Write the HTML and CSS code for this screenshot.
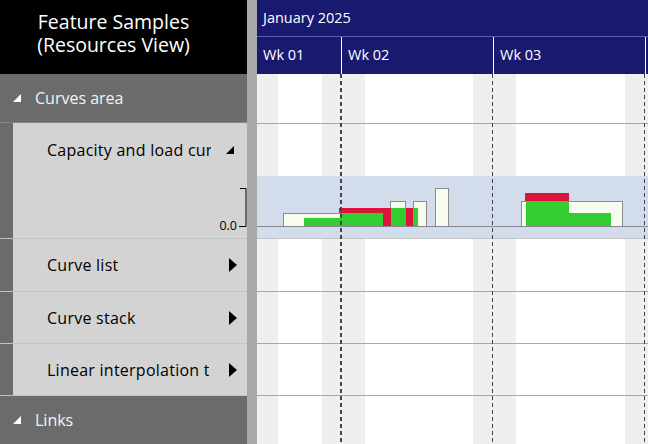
FILE: index.html
```html
<!DOCTYPE html>
<html>
<head>
<meta charset="utf-8">
<link rel="stylesheet" href="styles.css">
</head>
<body>
<div class="app">
  <div class="left">
    <div class="title"><div class="title-line">Feature Samples</div><div class="title-line">(Resources View)</div></div>
    <div class="group-row">
      <svg class="tri" width="10" height="10" viewBox="0 0 10 10"><polygon points="9,1 9,9 1,9" fill="#fff"/></svg>
      <span class="group-label">Curves area</span>
    </div>
    <div class="child cap-row">
      <div class="indent"></div>
      <div class="child-body">
        <div class="child-head">
          <span class="label">Capacity and load curves</span>
          <svg class="tri" width="10" height="10" viewBox="0 0 10 10"><polygon points="9,1 9,9 1,9" fill="#000"/></svg>
        </div>
        <div class="axis">
          <span class="axis-label">0.0</span>
          <svg class="bracket" width="8" height="40" viewBox="0 0 8 40"><path d="M1 0.5 H7 V38.5 H0" fill="none" stroke="#000" stroke-width="1"/></svg>
        </div>
      </div>
    </div>
    <div class="child item-row">
      <div class="indent"></div>
      <div class="child-body item-body">
        <span class="label">Curve list</span>
        <svg class="arrow" width="8" height="14" viewBox="0 0 8 14"><polygon points="0,0 8,7 0,14" fill="#000"/></svg>
      </div>
    </div>
    <div class="child item-row">
      <div class="indent"></div>
      <div class="child-body item-body">
        <span class="label">Curve stack</span>
        <svg class="arrow" width="8" height="14" viewBox="0 0 8 14"><polygon points="0,0 8,7 0,14" fill="#000"/></svg>
      </div>
    </div>
    <div class="child item-row">
      <div class="indent"></div>
      <div class="child-body item-body">
        <span class="label">Linear interpolation type</span>
        <svg class="arrow" width="8" height="14" viewBox="0 0 8 14"><polygon points="0,0 8,7 0,14" fill="#000"/></svg>
      </div>
    </div>
    <div class="group-row links-row">
      <svg class="tri" width="10" height="10" viewBox="0 0 10 10"><polygon points="9,1 9,9 1,9" fill="#fff"/></svg>
      <span class="group-label">Links</span>
    </div>
  </div>
  <div class="splitter"></div>
  <div class="chart">
    <div class="chart-head">
      <div class="month">January 2025</div>
      <div class="weeks">
        <div class="wk wk-first">Wk 01</div>
        <div class="wk">Wk 02</div>
        <div class="wk">Wk 03</div>
        <div class="wk wk-last"></div>
      </div>
    </div>
    <div class="chart-body">
      <div class="crow crow-group"></div>
      <div class="crow crow-cap">
        <div class="cap-top"></div>
        <div class="band">
          <svg width="391" height="62" viewBox="0 0 391 62">
            <g fill="#f6fdef" stroke="#8c8c8c" stroke-width="1">
              <rect x="26.5" y="37.5" width="57" height="13"/>
              <rect x="133.5" y="25.5" width="15" height="25"/>
              <rect x="156.5" y="25.5" width="13" height="25"/>
              <rect x="178.5" y="12.5" width="13" height="38"/>
              <rect x="264.5" y="25.5" width="101" height="25"/>
            </g>
            <g fill="#33cc33">
              <rect x="47" y="42" width="37" height="8"/>
              <rect x="84" y="37" width="42" height="13"/>
              <rect x="134" y="32" width="15" height="18"/>
              <rect x="156" y="32" width="5" height="18"/>
              <rect x="269" y="25" width="43" height="25"/>
              <rect x="312" y="37" width="42" height="13"/>
            </g>
            <g fill="#dc143c">
              <rect x="82" y="32" width="44" height="5"/>
              <rect x="126" y="32" width="8" height="18"/>
              <rect x="149" y="32" width="7" height="18"/>
              <rect x="268" y="17" width="44" height="8"/>
            </g>
            <line x1="0" y1="50.5" x2="391" y2="50.5" stroke="#8a8290" stroke-width="1"/>
          </svg>
        </div>
      </div>
      <div class="crow crow-list"></div>
      <div class="crow crow-item"></div>
      <div class="crow crow-item"></div>
      <div class="crow crow-links"></div>
      <div class="vline vline-today"></div>
      <div class="vline vline-w3"></div>
      <div class="vline vline-w4"></div>
    </div>
  </div>
</div>
</body>
</html>
```

FILE: styles.css
```css
* { box-sizing: border-box; }
html, body { margin: 0; padding: 0; }
body {
  width: 648px;
  height: 444px;
  overflow: hidden;
  font-family: "Open Sans", "Noto Sans", sans-serif;
  background: #fff;
}
.app {
  display: flex;
  width: 648px;
  height: 444px;
}
.left {
  width: 247px;
  flex: none;
  display: flex;
  flex-direction: column;
  background: #6b6b6b;
}
.title {
  height: 74px;
  background: #000;
  color: #fff;
  font-size: 19.5px;
  text-align: center;
  padding: 10px 20px 0 0;
}
.title-line {
  height: 23px;
  line-height: 23px;
}
.group-row {
  height: 49px;
  display: flex;
  align-items: center;
  padding-left: 12px;
  border-bottom: 1px solid #888;
  color: #f4f4f4;
}
.group-row .tri { margin-right: 13px; }
.group-label {
  font-size: 16px;
}
.links-row {
  border-bottom: none;
  flex: 1;
  height: auto;
  padding-bottom: 1px;
}
.child {
  display: flex;
  border-bottom: 1px solid #c2c2c2;
}
.indent {
  width: 13px;
  flex: none;
  background: #6b6b6b;
}
.child-body {
  flex: 1;
  background: #d3d3d3;
  min-width: 0;
}
.cap-row { height: 116px; }
.child-head {
  height: 53px;
  display: flex;
  align-items: center;
  padding-left: 34px;
  padding-right: 12px;
}
.label {
  font-size: 16px;
  letter-spacing: 0.25px;
  color: #000;
  white-space: nowrap;
  overflow: hidden;
  flex: 1;
  min-width: 0;
}
.cap-row .label { margin-right: 14px; }
.axis {
  height: 62px;
  display: flex;
  justify-content: flex-end;
  align-items: flex-start;
  padding-top: 12px;
}
.axis-label {
  font-size: 12.5px;
  color: #000;
  margin-top: 29px;
  margin-right: 2px;
}
.bracket { display: block; }
.item-row { height: 53px; }
.item-row + .item-row { height: 52px; }
.item-body {
  display: flex;
  align-items: center;
  padding-left: 34px;
  padding-right: 10px;
}
.item-body .label { margin-right: 20px; }
.arrow { flex: none; display: block; }
.tri { flex: none; display: block; }
.splitter {
  width: 10px;
  flex: none;
  background: #a9a9a9;
}
.chart {
  flex: 1;
  display: flex;
  flex-direction: column;
  min-width: 0;
}
.chart-head {
  height: 74px;
  background: #191970;
  color: #fff;
  font-size: 14.5px;
}
.month {
  height: 37px;
  line-height: 35px;
  padding-left: 6px;
  border-bottom: 1px solid #5f5fa6;
}
.weeks {
  display: flex;
  height: 37px;
}
.wk {
  width: 152px;
  flex: none;
  padding-left: 6px;
  line-height: 36px;
  border-left: 1px solid #fff;
}
.wk-first {
  width: 84px;
  border-left: none;
}
.wk-last { flex: 1; }
.chart-body {
  flex: 1;
  position: relative;
  background: linear-gradient(to right,
    #efefef 0 21px, #fff 21px 65px, #efefef 65px 108px,
    #fff 108px 216px, #efefef 216px 259px, #fff 259px 368px,
    #efefef 368px);
}
.crow {
  border-bottom: 1px solid #a8a8a8;
}
.crow-group { height: 50px; }
.crow-cap {
  height: 115px;
  border-bottom-color: #c4c4c4;
}
.cap-top { height: 52px; }
.band {
  height: 62px;
  background: #d3dcea;
}
.band svg { display: block; }
.crow-list { height: 53px; }
.crow-item { height: 52px; }
.crow-links { border-bottom: none; }
.vline {
  position: absolute;
  top: 0;
  bottom: 0;
  width: 1px;
  background: repeating-linear-gradient(to bottom, #444 0 4px, transparent 4px 7px);
}
.vline-today { left: 83px; width: 2px; }
.vline-w3 { left: 235px; }
.vline-w4 { left: 387px; }
```
